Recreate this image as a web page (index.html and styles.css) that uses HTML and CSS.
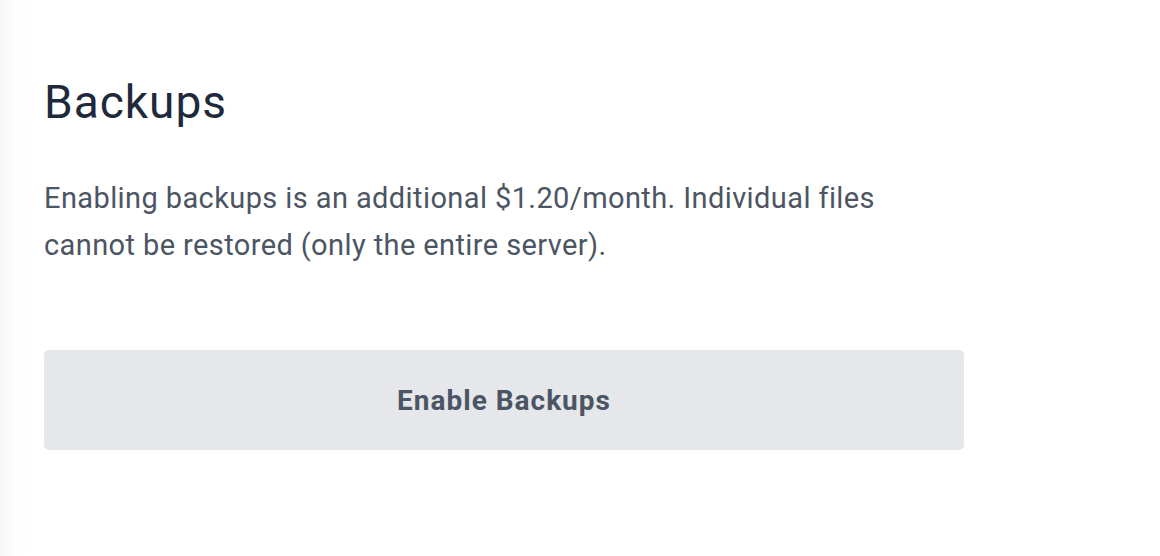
FILE: index.html
```html
<!DOCTYPE html>
<html>
<head>
<meta charset="utf-8">
<link rel="stylesheet" href="styles.css">
</head>
<body>
<main class="panel">
  <h1 class="title">Backups</h1>
  <p class="desc">Enabling backups is an additional $1.20/month. Individual files cannot be restored (only the entire server).</p>
  <button class="btn">Enable Backups</button>
</main>
</body>
</html>
```
FILE: styles.css
```css
html, body {
  margin: 0;
  padding: 0;
  height: 100%;
}
body {
  background: linear-gradient(to right, #f6f6f6 0px, #fafafa 8px, #fdfdfd 14px, #ffffff 30px);
  font-family: Roboto, "Noto Sans", sans-serif;
}
.panel {
  padding: 78px 0 0 44px;
  display: flex;
  flex-direction: column;
  align-items: flex-start;
}
.title {
  margin: 0;
  font-size: 46px;
  letter-spacing: 1px;
  line-height: 48px;
  font-weight: 400;
  color: #1e293b;
}
.desc {
  margin: 49px 0 0 0;
  width: 880px;
  font-size: 29px;
  letter-spacing: 0.4px;
  line-height: 47px;
  color: #4b5563;
}
.btn {
  margin-top: 81px;
  width: 920px;
  height: 100px;
  border: none;
  border-radius: 5px;
  background: #e5e7eb;
  color: #4b5563;
  font-family: Roboto, "Noto Sans", sans-serif;
  font-size: 28px;
  letter-spacing: 1px;
  font-weight: 700;
  padding: 0;
}
```
